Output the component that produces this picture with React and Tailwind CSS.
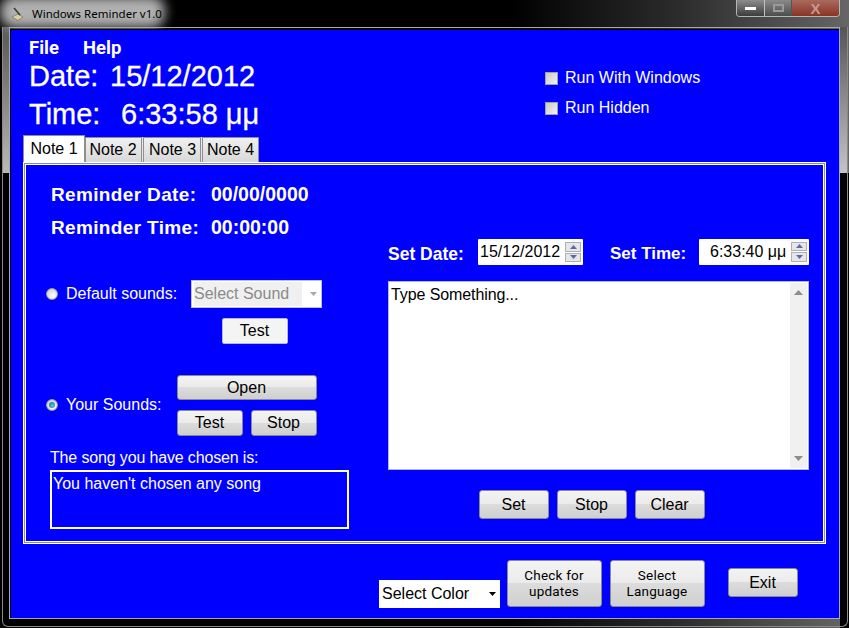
// App.jsx
import React from 'react';

const arial = 'font-["Liberation_Sans",Arial,sans-serif]';

const GlossButton = ({ className = '', children }) => (
  <button className={`flex items-center justify-center rounded-[3px] border border-[#8a8a8a] bg-[linear-gradient(#f3f3f3_0%,#ebebeb_48%,#dcdcdc_50%,#cfcfcf_100%)] pr-px text-black ${className}`}>
    {children}
  </button>
);

const Radio = ({ checked }) => (
  <span className="flex h-[12px] w-[12px] shrink-0 items-center justify-center rounded-full border border-[#9a9a9a] bg-[radial-gradient(circle_at_60%_65%,#ffffff,#c4c4c4)]">
    {checked && <span className="h-[6px] w-[6px] rounded-full bg-[radial-gradient(circle_at_60%_60%,#5fc4e8,#0d5f80)]" />}
  </span>
);

const Checkbox = ({ label }) => (
  <div className="flex h-[20px] items-center text-white">
    <span className="h-[13px] w-[13px] border border-[#a0a0a0] bg-[linear-gradient(135deg,#c8c8c8,#f2f2f2)]" />
    <span className="ml-[7px] text-[16px]">{label}</span>
  </div>
);

const Spinner = () => (
  <div className="flex h-[20px] w-[16px] flex-col gap-px">
    <div className="flex flex-1 items-center justify-center border border-[#b0b0b0] bg-[#e6e6e6]">
      <svg width="7" height="4" viewBox="0 0 7 4"><path d="M3.5 0 7 4H0z" fill="#5a6aa8" /></svg>
    </div>
    <div className="flex flex-1 items-center justify-center border border-[#b0b0b0] bg-[#e6e6e6]">
      <svg width="7" height="4" viewBox="0 0 7 4"><path d="M0 0h7L3.5 4z" fill="#5a6aa8" /></svg>
    </div>
  </div>
);

const Tab = ({ active, className = '', children }) => (
  <div className={`flex items-center justify-center border border-b-0 border-[#8e8e8e] text-[16px] text-black ${active ? 'h-[27px] bg-white' : 'h-[25px] bg-[linear-gradient(#f0f0f0,#d8d8d8)]'} ${className}`}>
    {children}
  </div>
);

const TitleIcon = () => (
  <svg width="16" height="16" viewBox="0 0 16 16">
    <path d="M1 11 7 8l5 3-5 3.5z" fill="#d8cfa8" stroke="#6b6448" strokeWidth="0.6" />
    <path d="M3 2 9 9" stroke="#3a3a30" strokeWidth="1.6" />
  </svg>
);

const App = () => {
  return (
    <div className={`relative flex h-[628px] w-[849px] flex-col overflow-hidden bg-[linear-gradient(90deg,#000_0%,#000_60%,#2c2c2c_80%,#666_100%)] ${arial}`}>
      {/* glass edges of the window frame */}
      <div className="absolute left-[3px] top-[27px] h-[146px] w-[6px] bg-[linear-gradient(#555,#b8b8b8)]" />
      <div className="absolute left-[840px] top-[27px] h-[146px] w-[7px] bg-[linear-gradient(#555,#c4c4c4)]" />
      <div className="absolute left-0 top-[173px] h-[455px] w-[10px] bg-black" />
      <div className="absolute left-[840px] top-[173px] h-[455px] w-[9px] bg-black" />
      <div className="absolute bottom-[1px] left-[2px] top-[27px] w-[846px] rounded-b-[6px] border border-t-0 border-[#8a8a8a]" />

      {/* title bar */}
      <div className="relative flex h-[27px] shrink-0 items-center pl-[11px]">
        <div className="absolute left-0 top-[-4px] h-[32px] w-[165px] rounded-[14px] bg-[#c4c4c4] opacity-90 blur-[6px]" />
        <div className="relative flex items-center">
          <TitleIcon />
          <span className="ml-[5px] font-['Noto_Sans'] text-[11.5px] text-black">Windows Reminder v1.0</span>
        </div>
        {/* window buttons */}
        <div className="absolute left-[736px] top-0 flex h-[17px] w-[104px] overflow-hidden rounded-b-[4px] border border-t-0 border-[#b5b5b5]">
          <div className="flex w-[28px] items-center justify-center border-r border-[#c0c0c0] bg-[linear-gradient(#8d8d8d,#3c3c3c)]">
            <span className="h-[3px] w-[11px] bg-white" />
          </div>
          <div className="flex w-[27px] items-center justify-center border-r border-[#555] bg-[linear-gradient(#8a8a8a,#4c4c4c)]">
            <span className="h-[8px] w-[11px] border-2 border-[#9a9a9a]" />
          </div>
          <div className="flex flex-1 items-center justify-center bg-[linear-gradient(#a96a5e,#8a3325)] text-[15px] font-bold leading-none text-[#c79a90]">
            X
          </div>
        </div>
      </div>

      {/* window frame */}
      <div className="relative mx-[9px] mb-[9px] flex-1 border border-[#a8a8a8] pt-px">
        <div className="flex h-[589px] flex-col border-l border-t border-black bg-[#0000ff] pl-[12px] pr-[11px]">
          {/* header */}
          <div className="flex h-[105px] shrink-0">
            <div className="w-[522px] pl-[6px] pt-[9px] text-white">
              <div className="flex h-[20px] items-center gap-[24px] font-['Roboto'] text-[18.5px] font-bold">
                <span>File</span>
                <span>Help</span>
              </div>
              <div className="mt-[2px] flex h-[32px] items-center text-[29px] [-webkit-text-stroke:0.3px_white]">
                <span className="w-[81px]">Date:</span>
                <span>15/12/2012</span>
              </div>
              <div className="mt-[6px] flex h-[32px] items-center text-[29px] [-webkit-text-stroke:0.3px_white]">
                <span className="w-[92px]">Time:</span>
                <span>6:33:58 μμ</span>
              </div>
            </div>
            <div className="pt-[38px]">
              <Checkbox label="Run With Windows" />
              <div className="mt-[10px]">
                <Checkbox label="Run Hidden" />
              </div>
            </div>
          </div>

          {/* tabs */}
          <div className="flex h-[27px] shrink-0 items-end">
            <Tab active className="w-[62px]">Note 1</Tab>
            <div className="flex gap-px bg-[#e8e8e8]">
              <Tab className="w-[57px] pr-px">Note 2</Tab>
              <Tab className="w-[58px] pl-px">Note 3</Tab>
              <Tab className="w-[57px]">Note 4</Tab>
            </div>
          </div>

          {/* tab panel */}
          <div className="flex h-[382px] w-[803px] shrink-0 border border-white bg-[#0000ff] shadow-[inset_0_0_0_1px_#8e8e8e,inset_0_0_0_2px_#ffffff]">
            {/* left column */}
            <div className="ml-[26px] w-[301px] pt-[19px] text-white">
              <div className="flex h-[26px] items-center font-bold">
                <span className="w-[161px] pl-px text-[19px] tracking-[0.35px]">Reminder Date:</span>
                <span className="text-[19.5px]">00/00/0000</span>
              </div>
              <div className="mt-[7px] flex h-[26px] items-center font-bold">
                <span className="w-[161px] pl-px text-[19px] tracking-[0.35px]">Reminder Time:</span>
                <span className="text-[19.5px]">00:00:00</span>
              </div>

              <div className="mt-[39px] flex h-[28px] items-center">
                <span className="ml-[-4px]"><Radio /></span>
                <span className="ml-[8px] w-[125px] text-[16px]">Default sounds:</span>
                <div className="flex h-[28px] w-[131px] items-center border border-[#c0c0c0] bg-white pl-[2px] text-[16px] text-[#8a8a8a]">
                  <span className="flex h-[24px] w-[108px] items-center bg-[#f0f0f0]">Select Sound</span>
                  <svg className="ml-[8px]" width="7" height="4" viewBox="0 0 7 4"><path d="M0 0h7L3.5 4z" fill="#a8a8a8" /></svg>
                </div>
              </div>
              <button className="ml-[172px] mt-[10px] flex h-[26px] w-[66px] items-center justify-center rounded-[2px] border border-[#b8b8c8] bg-[#f4f4f4] pr-px text-[16px] text-black">
                Test
              </button>

              <div className="mt-[31px] flex h-[61px] items-center">
                <span className="ml-[-4px] mt-[-2px]"><Radio checked /></span>
                <span className="ml-[8px] mt-[-2px] w-[111px] text-[16px]">Your Sounds:</span>
                <div className="w-[140px]">
                  <GlossButton className="h-[25px] w-full text-[16px]">Open</GlossButton>
                  <div className="mt-[10px] flex justify-between">
                    <GlossButton className="h-[26px] w-[66px] text-[16px]">Test</GlossButton>
                    <GlossButton className="h-[26px] w-[66px] text-[16px]">Stop</GlossButton>
                  </div>
                </div>
              </div>

              <div className="mt-[12px] flex h-[20px] items-center text-[16px] tracking-[-0.15px]">The song you have chosen is:</div>
              <div className="mt-[2px] h-[59px] w-[299px] border-2 border-white pl-px pt-px text-[16px] leading-[22px]">
                You haven't chosen any song
              </div>
            </div>

            {/* right column */}
            <div className="ml-[37px] w-[421px] pt-[75px]">
              <div className="flex h-[27px] items-center text-[16px] font-bold text-white">
                <span className="mt-[5px] w-[90px] text-[17.5px]">Set Date:</span>
                <div className="mt-[1px] flex h-[26px] w-[105px] items-center justify-between rounded-[1px] bg-white pl-[2px] pr-[2px] font-normal text-black">
                  <span>15/12/2012</span>
                  <Spinner />
                </div>
                <span className="ml-[27px] mt-[5px] w-[89px] text-[17px]">Set Time:</span>
                <div className="flex h-[26px] w-[110px] items-center justify-between rounded-[1px] bg-white pl-[11px] pr-[2px] font-normal text-black">
                  <span>6:33:40 μμ</span>
                  <Spinner />
                </div>
              </div>

              <div className="mt-[16px] flex h-[189px] justify-between border border-[#b4b4d4] bg-white">
                <span className="pl-[2px] pt-px text-[16px] tracking-[-0.1px] text-black">Type Something...</span>
                <div className="my-px mr-px flex w-[17px] flex-col items-center justify-between bg-[#f0f0f0] py-[7px]">
                  <svg width="9" height="5" viewBox="0 0 9 5"><path d="M4.5 0 9 5H0z" fill="#8c8c8c" /></svg>
                  <svg width="9" height="5" viewBox="0 0 9 5"><path d="M0 0h9L4.5 5z" fill="#8c8c8c" /></svg>
                </div>
              </div>

              <div className="ml-[91px] mt-[20px] flex gap-[8px]">
                <GlossButton className="h-[29px] w-[70px] text-[16px]">Set</GlossButton>
                <GlossButton className="h-[29px] w-[70px] text-[16px]">Stop</GlossButton>
                <GlossButton className="h-[29px] w-[70px] text-[16px]">Clear</GlossButton>
              </div>
            </div>
          </div>

          {/* bottom bar */}
          <div className="ml-[356px] mt-[16px] flex items-start">
            <div className="mt-[20px] flex h-[28px] w-[121px] items-center justify-between bg-white pl-[3px] pr-[4px] text-[16px] text-black">
              <span>Select Color</span>
              <svg width="7" height="4" viewBox="0 0 7 4"><path d="M0 0h7L3.5 4z" fill="#000" /></svg>
            </div>
            <GlossButton className="ml-[7px] h-[47px] w-[95px] pb-[2px] text-center font-['Roboto'] text-[13.5px] leading-[16px] tracking-[0.2px]">Check for<br />updates</GlossButton>
            <GlossButton className="ml-[8px] h-[47px] w-[95px] pb-[2px] text-center font-['Roboto'] text-[13.5px] leading-[16px] tracking-[0.2px]">Select<br />Language</GlossButton>
            <GlossButton className="ml-[23px] mt-[8px] h-[29px] w-[70px] text-[16px]">Exit</GlossButton>
          </div>
        </div>
      </div>
    </div>
  );
};

export default App;
